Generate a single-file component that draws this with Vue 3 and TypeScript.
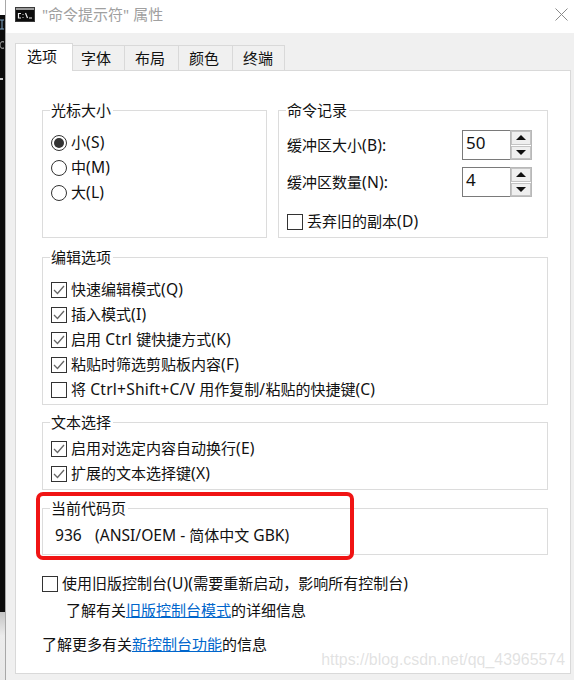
<script setup lang="ts">
interface CheckRow {
  text: string
  checked: boolean
}

interface Part {
  text: string
  latin: boolean
}

const radios: string[] = ['小(S)', '中(M)', '大(L)']

const editOptions: CheckRow[] = [
  { text: '快速编辑模式(Q)', checked: true },
  { text: '插入模式(I)', checked: true },
  { text: '启用 Ctrl 键快捷方式(K)', checked: true },
  { text: '粘贴时筛选剪贴板内容(F)', checked: true },
  { text: '将 Ctrl+Shift+C/V 用作复制/粘贴的快捷键(C)', checked: false },
]

const selectOptions: CheckRow[] = [
  { text: '启用对选定内容自动换行(E)', checked: true },
  { text: '扩展的文本选择键(X)', checked: true },
]

const buffers = [
  { label: '缓冲区大小(B):', value: '50' },
  { label: '缓冲区数量(N):', value: '4' },
]

const tabs: string[] = ['选项', '字体', '布局', '颜色', '终端']

// The Latin part of each label is set a little larger than the Chinese part.
function parts(text: string): Part[] {
  return text
    .split(/([\u4e00-\u9fff，]+)/)
    .filter((t) => t.length > 0)
    .map((t) => ({ text: t, latin: !/[\u4e00-\u9fff，]/.test(t) }))
}
</script>

<template>
  <div class="screen">
    <div class="backdrop">
      <div class="backdrop-top"></div>
      <div class="backdrop-dark">
        <svg width="5" height="70" viewBox="0 0 5 70">
          <path d="M2 5v9M0 5h4M0 14h4" stroke="#7fa4c4" stroke-width="1" fill="none" />
          <path d="M4 27c-3-1-4 1-4 3s1 4 4 3" stroke="#c8c8c8" stroke-width="1" fill="none" />
          <path d="M0 64h3" stroke="#c8c8c8" stroke-width="2" fill="none" />
        </svg>
      </div>
      <div class="backdrop-fade"></div>
    </div>

    <div class="window">
      <header class="titlebar">
        <svg class="app-icon" width="20" height="15" viewBox="0 0 20 15">
          <rect x="0" y="0" width="20" height="15" fill="#3a3a3a" />
          <rect x="1" y="1" width="18" height="2" fill="#9a9a9a" />
          <rect x="1" y="3" width="18" height="11" fill="#0c0c0c" />
          <path d="M6 6.5H3.5V11H6M8 7v.8M8 10v.8M10.5 6l2 5M14 11h3" fill="none" stroke="#f0f0f0" stroke-width="1.2" />
        </svg>
        <span class="title">"命令提示符" 属性</span>
        <svg class="close" width="13" height="13" viewBox="0 0 13 13">
          <path d="M.5.5l12 12M12.5.5l-12 12" stroke="#8a8a8a" stroke-width="1" fill="none" />
        </svg>
      </header>

      <div class="body">
        <nav class="tabs">
          <span
            v-for="(tab, i) in tabs"
            :key="tab"
            class="tab"
            :class="{ active: i === 0 }"
          >{{ tab }}</span>
        </nav>

        <main class="panel">
          <div class="top-row">
            <section class="group cursor-group">
              <div class="legend">光标大小</div>
              <div class="rows">
                <div v-for="(r, i) in radios" :key="r" class="row">
                  <span class="radio"><span v-if="i === 0" class="dot"></span></span>
                  <span class="label"><span v-for="p in parts(r)" :key="p.text" :class="{ latin: p.latin }">{{ p.text }}</span></span>
                </div>
              </div>
            </section>

            <section class="group history-group">
              <div class="legend">命令记录</div>
              <div class="spin-rows">
                <div v-for="b in buffers" :key="b.label" class="spin-row">
                  <span class="spin-label"><span v-for="p in parts(b.label)" :key="p.text" :class="{ latin: p.latin }">{{ p.text }}</span></span>
                  <div class="spin">
                    <span class="spin-input">{{ b.value }}</span>
                    <div class="spin-buttons">
                      <span class="spin-btn"><i class="tri up"></i></span>
                      <span class="spin-btn"><i class="tri down"></i></span>
                    </div>
                  </div>
                </div>
              </div>
              <div class="row discard">
                <span class="box"></span>
                <span class="label">丢弃旧的副本<span class="latin">(D)</span></span>
              </div>
            </section>
          </div>

          <section class="group edit-group">
            <div class="legend">编辑选项</div>
            <div class="rows">
              <div v-for="o in editOptions" :key="o.text" class="row">
                <span class="box">
                  <svg v-if="o.checked" width="12" height="10" viewBox="0 0 12 10">
                    <path d="M1 5l3.5 3.5L11 1" fill="none" stroke="#666" stroke-width="1.3" />
                  </svg>
                </span>
                <span class="label"><span v-for="p in parts(o.text)" :key="p.text" :class="{ latin: p.latin }">{{ p.text }}</span></span>
              </div>
            </div>
          </section>

          <section class="group select-group">
            <div class="legend">文本选择</div>
            <div class="rows tight">
              <div v-for="o in selectOptions" :key="o.text" class="row">
                <span class="box">
                  <svg width="12" height="10" viewBox="0 0 12 10">
                    <path d="M1 5l3.5 3.5L11 1" fill="none" stroke="#666" stroke-width="1.3" />
                  </svg>
                </span>
                <span class="label"><span v-for="p in parts(o.text)" :key="p.text" :class="{ latin: p.latin }">{{ p.text }}</span></span>
              </div>
            </div>
          </section>

          <section class="group codepage-group">
            <div class="legend">当前代码页</div>
            <div class="codepage"><span class="code-num">936</span><span class="code-text">(ANSI/OEM - </span>简体中文<span class="code-text"> GBK)</span></div>
          </section>

          <div class="row legacy">
            <span class="box"></span>
            <span class="label"><span v-for="p in parts('使用旧版控制台(U)(需要重新启动，影响所有控制台)')" :key="p.text" :class="{ latin: p.latin }">{{ p.text }}</span></span>
          </div>
          <div class="legacy-info">了解有关<a class="link">旧版控制台模式</a>的详细信息</div>
          <div class="more-info">了解更多有关<a class="link">新控制台功能</a>的信息</div>
        </main>
      </div>
    </div>

    <div class="highlight"></div>
    <div class="watermark">https://blog.csdn.net/qq_43965574</div>
  </div>
</template>

<style scoped>
.screen {
  position: relative;
  display: flex;
  width: 574px;
  height: 680px;
  overflow: hidden;
  background: #f0f0f0;
  font-family: "Noto Sans", "Noto Sans CJK SC", sans-serif;
  font-size: 15px;
  color: #111;
}

.latin {
  font-size: 15.6px;
  letter-spacing: 0.2px;
}

.backdrop {
  display: flex;
  flex-direction: column;
  flex: none;
  width: 6px;
  border-right: 1px solid #a8a8a8;
  box-sizing: border-box;
}
.backdrop-top {
  height: 15px;
  background: #fff;
}
.backdrop-dark {
  height: 597px;
  background: #0c0c0c;
  overflow: hidden;
}
.backdrop-dark svg {
  display: block;
}
.backdrop-fade {
  flex: 1;
  background: linear-gradient(#c4c4c4, #ececec 35%, #e8e8e8);
}

.window {
  display: flex;
  flex: 1;
  flex-direction: column;
  min-width: 0;
}

.titlebar {
  display: flex;
  align-items: center;
  flex: none;
  height: 33px;
  padding: 0 6px 4px 9px;
  box-sizing: border-box;
  background: #fff;
}
.app-icon {
  flex: none;
}
.title {
  margin-left: 7px;
  padding-bottom: 2px;
  color: #a0a0a0;
  font-size: 15px;
}
.close {
  margin-left: auto;
}

.body {
  display: flex;
  flex: 1;
  flex-direction: column;
  padding: 10px 3px 6px 9px;
  background: #f0f0f0;
}

.tabs {
  display: flex;
  align-items: flex-end;
  height: 27px;
  flex: none;
}
.tab {
  display: flex;
  align-items: center;
  width: 55px;
  height: 25px;
  margin-right: -1px;
  padding: 0 0 2px 10px;
  box-sizing: border-box;
  border: 1px solid #d9d9d9;
  border-bottom: 0;
  background: #f0f0f0;
  font-size: 15px;
}
.tab:nth-child(2) {
  width: 53px;
  padding-left: 8px;
}
.tab:nth-child(5) {
  width: 53px;
}
.tab.active {
  position: relative;
  z-index: 1;
  width: 58px;
  height: 28px;
  margin-bottom: -1px;
  padding: 0 0 5px 11px;
  background: #fff;
}

.panel {
  flex: 1;
  box-sizing: border-box;
  padding: 39px 22px 0 26px;
  border: 1px solid #d9d9d9;
  background: #fff;
}

.top-row {
  display: flex;
  gap: 11px;
}

.group {
  box-sizing: border-box;
  padding-left: 8px;
  border: 1px solid #dcdcdc;
}
.legend {
  display: table;
  height: 22px;
  margin-top: -11px;
  margin-left: -1px;
  padding: 0 2px 0 1px;
  line-height: 20px;
  background: #fff;
}

.cursor-group {
  width: 225px;
  height: 128px;
}
.history-group {
  width: 270px;
  height: 128px;
  padding-right: 15px;
}
.edit-group {
  height: 148px;
  margin-top: 19px;
}
.select-group {
  height: 68px;
  margin-top: 17px;
}
.codepage-group {
  height: 47px;
  margin-top: 18px;
}

.rows {
  margin-top: 8px;
}
.rows.tight {
  margin-top: 2px;
}

.row {
  display: flex;
  align-items: center;
  height: 25px;
  white-space: nowrap;
}
.label {
  margin-left: 4px;
  padding-bottom: 2px;
}

.radio {
  display: flex;
  align-items: center;
  justify-content: center;
  flex: none;
  width: 16px;
  height: 16px;
  box-sizing: border-box;
  border: 1px solid #333;
  border-radius: 50%;
}
.dot {
  width: 10px;
  height: 10px;
  border-radius: 50%;
  background: #333;
}

.box {
  display: flex;
  align-items: center;
  justify-content: center;
  flex: none;
  width: 16px;
  height: 16px;
  box-sizing: border-box;
  border: 1px solid #333;
  background: #fff;
}

.spin-rows {
  display: flex;
  flex-direction: column;
  gap: 7px;
  margin-top: 8px;
}
.spin-row {
  display: flex;
  align-items: center;
  justify-content: space-between;
  height: 30px;
}
.spin {
  display: flex;
  width: 70px;
  height: 30px;
}
.spin-input {
  flex: 1;
  box-sizing: border-box;
  padding: 0 0 3px 3px;
  border: 1px solid #7a7a7a;
  border-right: 0;
  font-size: 17px;
  line-height: 24px;
}
.spin-buttons {
  display: flex;
  flex-direction: column;
  gap: 1px;
  flex: none;
  width: 22px;
  box-sizing: border-box;
  border: 1px solid #b8b8b8;
  background: #fff;
}
.spin-btn {
  display: flex;
  align-items: center;
  justify-content: center;
  flex: 1;
  background: #efefef;
  border: 1px solid #c4c4c4;
}
.tri {
  width: 0;
  height: 0;
  border-left: 5px solid transparent;
  border-right: 5px solid transparent;
}
.tri.up {
  border-bottom: 5px solid #111;
}
.tri.down {
  border-top: 5px solid #111;
}

.discard {
  margin-top: 12px;
}

.codepage {
  margin-top: 3px;
  padding-left: 4px;
  font-size: 15px;
  line-height: 25px;
  white-space: pre;
}
.code-num {
  display: inline-block;
  width: 40px;
  font-size: 15.6px;
}
.code-text {
  font-size: 15.6px;
}

.legacy {
  margin-top: 16px;
}
.legacy-info {
  margin-top: 2px;
  padding-left: 24px;
  line-height: 25px;
}
.more-info {
  margin-top: 9px;
  line-height: 25px;
}
.link {
  color: #0066cc;
  text-decoration: underline;
}

.highlight {
  position: absolute;
  left: 36px;
  top: 492px;
  width: 318px;
  height: 68px;
  box-sizing: border-box;
  border: 4px solid #f01414;
  border-radius: 7px;
  pointer-events: none;
}

.watermark {
  position: absolute;
  right: 9px;
  top: 650px;
  font-family: "Liberation Sans", sans-serif;
  font-size: 15.9px;
  line-height: 20px;
  color: rgba(190, 190, 190, 0.45);
  pointer-events: none;
}
</style>
